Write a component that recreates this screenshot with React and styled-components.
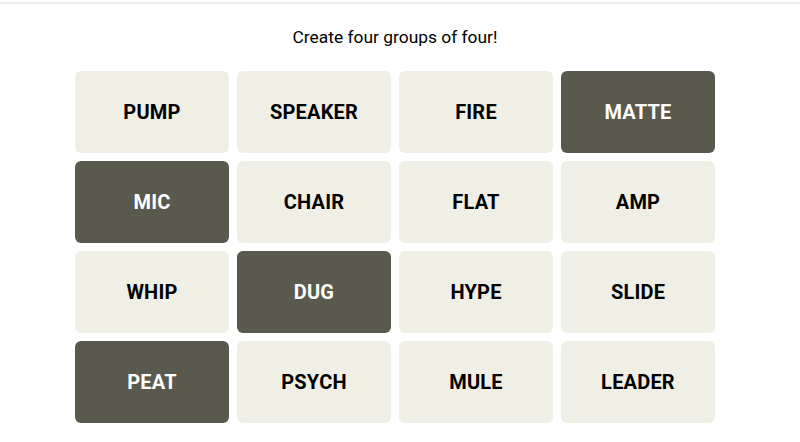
import React from "react";
import styled, { createGlobalStyle } from "styled-components";

const GlobalStyle = createGlobalStyle`
  html, body {
    margin: 0;
    padding: 0;
    background: #ffffff;
  }
  body {
    font-family: Roboto, "Liberation Sans", Arial, sans-serif;
  }
`;

const words = [
  ["PUMP", false],
  ["SPEAKER", false],
  ["FIRE", false],
  ["MATTE", true],
  ["MIC", true],
  ["CHAIR", false],
  ["FLAT", false],
  ["AMP", false],
  ["WHIP", false],
  ["DUG", true],
  ["HYPE", false],
  ["SLIDE", false],
  ["PEAT", true],
  ["PSYCH", false],
  ["MULE", false],
  ["LEADER", false],
];

function App() {
  return (
    <Page>
      <GlobalStyle />
      <TopBar />
      <Main>
        <Prompt>Create four groups of four!</Prompt>
        <Board>
          {words.map(([word, selected]) => (
            <Tile key={word} selected={selected}>
              {word}
            </Tile>
          ))}
        </Board>
      </Main>
    </Page>
  );
}

export default App;

const Page = styled.div`
  width: 100%;
  min-height: 442px;
  background: #ffffff;
`;

const TopBar = styled.div`
  height: 2px;
  border-bottom: 2px solid #ededed;
`;

const Main = styled.div`
  width: 790px;
  display: flex;
  flex-direction: column;
  align-items: center;
`;

const Prompt = styled.p`
  margin: 21px 0 22px;
  font-size: 17.4px;
  line-height: 24px;
  font-weight: 400;
  color: #000000;
`;

const Board = styled.div`
  display: grid;
  grid-template-columns: repeat(4, 154px);
  grid-auto-rows: 82px;
  gap: 8px;
`;

const Tile = styled.div`
  display: flex;
  align-items: center;
  justify-content: center;
  border-radius: 6px;
  background-color: ${(props) => (props.selected ? "#5a594e" : "#efefe6")};
  color: ${(props) => (props.selected ? "#ffffff" : "#000000")};
  font-family: Roboto, "Liberation Sans", Arial, sans-serif;
  font-size: 20px;
  font-weight: 700;
  letter-spacing: 0.2px;
  cursor: pointer;
  user-select: none;
`;
